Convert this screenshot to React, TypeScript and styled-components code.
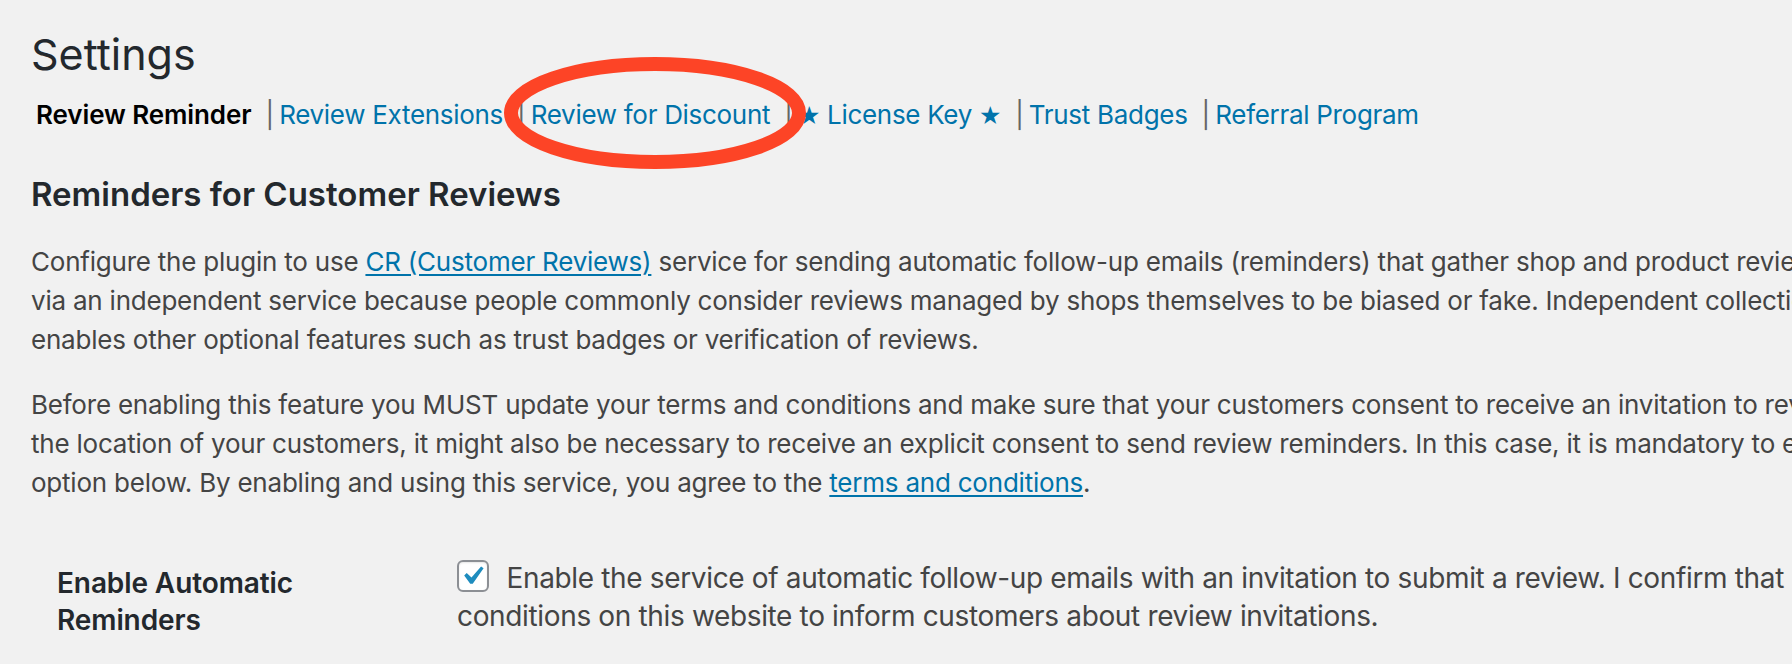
import React from 'react';
import styled, { createGlobalStyle } from 'styled-components';

// page-wide defaults (wp-admin look, 2x scale)
const GlobalStyle = createGlobalStyle`
  html, body {
    margin: 0;
    padding: 0;
    background: #f1f1f1;
    overflow: hidden;
  }
  body {
    font-family: Inter, "Noto Sans", "DejaVu Sans", sans-serif;
    color: #444;
  }
`;

const Wrap = styled.div`
  width: 2600px;
  min-height: 664px;
  padding: 27px 0 0 31px;
  box-sizing: border-box;
`;

const Title = styled.h1`
  margin: 0;
  font-size: 43px;
  font-weight: 400;
  line-height: 54px;
  color: #23282d;
`;

const NavBar = styled.ul`
  position: relative;
  display: flex;
  align-items: baseline;
  margin: 14px 0 0;
  padding: 0 0 0 5px;
  list-style: none;
  font-size: 26px;
  line-height: 39px;
  white-space: nowrap;
`;

const NavItem = styled.li`
  display: flex;
  align-items: baseline;
`;

const NavLink = styled.a<{ $current?: boolean }>`
  color: ${(p) => (p.$current ? '#000' : '#0073aa')};
  font-weight: ${(p) => (p.$current ? 600 : 400)};
  letter-spacing: ${(p) => (p.$current ? '-0.1px' : '-0.3px')};
  text-decoration: none;
`;

const Star = styled.span`
  font-family: "DejaVu Sans", sans-serif;
  font-size: 25px;
`;

const Sep = styled.span`
  color: #666;
  margin: 0 5px 0 14px;
`;

// the red hand-drawn circle around "Review for Discount"
const Highlight = styled.svg`
  position: absolute;
  left: 473px;
  top: -38px;
  width: 302px;
  height: 112px;
  overflow: visible;
  pointer-events: none;
`;

const SectionTitle = styled.h2`
  margin: 38px 0 0;
  font-size: 33px;
  font-weight: 600;
  line-height: 42px;
  color: #23282d;
`;

const Para = styled.p<{ $first?: boolean }>`
  margin: ${(p) => (p.$first ? '27px' : '26px')} 0 0;
  font-size: 26px;
  line-height: 39px;
  letter-spacing: -0.22px;
  white-space: nowrap;
`;

const TextLink = styled.a`
  color: #0073aa;
  text-decoration: underline;
  text-underline-offset: 3px;
`;

const FormRow = styled.div`
  display: grid;
  grid-template-columns: 400px auto;
  margin-top: 63px;
  padding-left: 26px;
`;

const RowLabel = styled.div`
  font-size: 28px;
  font-weight: 600;
  line-height: 37px;
  color: #23282d;
  letter-spacing: -0.1px;
`;

const RowField = styled.div`
  margin-top: -6px;
  font-size: 28px;
  line-height: 38px;
  color: #444;
  letter-spacing: -0.35px;
  white-space: nowrap;
`;

const CheckBox = styled.span`
  display: inline-block;
  width: 32px;
  height: 32px;
  box-sizing: border-box;
  margin-right: 10px;
  vertical-align: -4px;
  border: 2px solid #8c8f94;
  border-radius: 6px;
  background: #fff;
  box-shadow: inset 0 1px 2px rgba(0, 0, 0, 0.1);

  svg {
    display: block;
    width: 100%;
    height: 100%;
  }
`;

const tabs = [
  { label: 'Review Reminder', current: true },
  { label: 'Review Extensions' },
  { label: 'Review for Discount' },
  { label: 'License Key', starred: true },
  { label: 'Trust Badges' },
  { label: 'Referral Program' },
];

export default function App() {
  return (
    <>
      <GlobalStyle />
      <Wrap>
        <Title>Settings</Title>

        <NavBar>
          {tabs.map((t, i) => (
            <NavItem key={t.label}>
              {i > 0 && <Sep>|</Sep>}
              <NavLink href="#" $current={t.current}>
                {t.starred ? (
                  <>
                    <Star>★</Star> {t.label} <Star>★</Star>
                  </>
                ) : (
                  t.label
                )}
              </NavLink>
            </NavItem>
          ))}
          <Highlight viewBox="0 0 302 112">
            <ellipse cx="151" cy="56" rx="144" ry="49" fill="none" stroke="#fd4426" strokeWidth="14" />
          </Highlight>
        </NavBar>

        <SectionTitle>Reminders for Customer Reviews</SectionTitle>

        <Para $first>
          Configure the plugin to use <TextLink href="#">CR (Customer Reviews)</TextLink> service for sending automatic
          follow-up emails (reminders) that gather shop and product reviews. It is important to collect reviews
          <br />
          via an independent service because people commonly consider reviews managed by shops themselves to be biased or
          fake. Independent collection of reviews also
          <br />
          enables other optional features such as trust badges or verification of reviews.
        </Para>

        <Para>
          Before enabling this feature you MUST update your terms and conditions and make sure that your customers consent
          to receive an invitation to review their purchases. Depending on
          <br />
          the location of your customers, it might also be necessary to receive an explicit consent to send review
          reminders. In this case, it is mandatory to enable the ‘Customer Consent’
          <br />
          option below. By enabling and using this service, you agree to the{' '}
          <TextLink href="#">terms and conditions</TextLink>.
        </Para>

        <FormRow>
          <RowLabel>
            Enable Automatic
            <br />
            Reminders
          </RowLabel>
          <RowField>
            <CheckBox>
              <svg viewBox="3 2.5 15 15">
                <path fill="#1e8cbe" d="M14.83 4.89l1.34.94-5.81 8.38H9.02L5.78 9.67l1.34-1.25 2.57 2.4z" />
              </svg>
            </CheckBox>{' '}
            Enable the service of automatic follow-up emails with an invitation to submit a review. I confirm that I have
            updated the terms and
            <br />
            conditions on this website to inform customers about review invitations.
          </RowField>
        </FormRow>
      </Wrap>
    </>
  );
}
